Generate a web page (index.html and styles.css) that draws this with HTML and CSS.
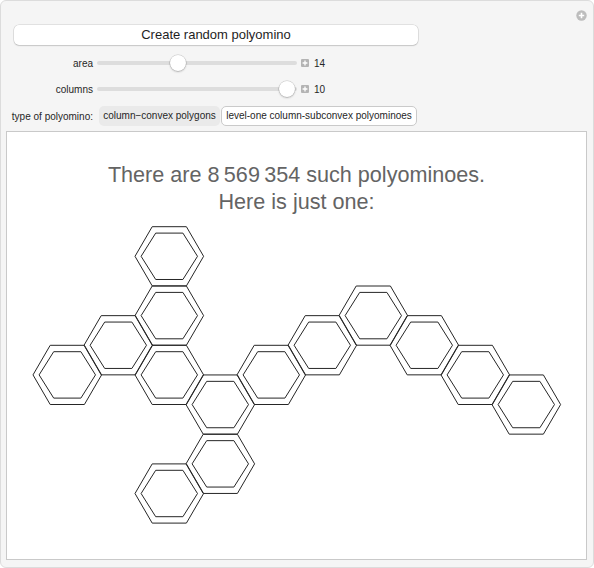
FILE: index.html
```html
<!DOCTYPE html>
<html>
<head>
<meta charset="utf-8">
<link rel="stylesheet" href="styles.css">
</head>
<body>
<div class="window">
  <div class="header">
    <svg class="corner-icon" width="11" height="11" viewBox="0 0 11 11">
      <circle cx="5.5" cy="5.5" r="5.2" fill="#bdbdbd"/>
      <path d="M5.5 2.8v5.4M2.8 5.5h5.4" stroke="#fff" stroke-width="1.6"/>
    </svg>
  </div>
  <button class="main-btn">Create random polyomino</button>
  <div class="row">
    <span class="label">area</span>
    <div class="slider"><div class="track"></div><div class="thumb" style="left:40.5%"></div></div>
    <svg class="plus" width="8" height="8" viewBox="0 0 8 8"><rect width="8" height="8" rx="1" fill="#b4b4b4"/><path d="M4 1.6v4.8M1.6 4h4.8" stroke="#fff" stroke-width="1.3"/></svg>
    <span class="value">14</span>
  </div>
  <div class="row">
    <span class="label">columns</span>
    <div class="slider"><div class="track"></div><div class="thumb" style="left:95%"></div></div>
    <svg class="plus" width="8" height="8" viewBox="0 0 8 8"><rect width="8" height="8" rx="1" fill="#b4b4b4"/><path d="M4 1.6v4.8M1.6 4h4.8" stroke="#fff" stroke-width="1.3"/></svg>
    <span class="value">10</span>
  </div>
  <div class="type-row">
    <span class="label">type of polyomino:</span>
    <div class="segmented">
      <span class="seg">column−convex polygons</span>
      <span class="seg active">level-one column-subconvex polyominoes</span>
    </div>
  </div>
  <div class="output">
    <div class="caption">There are 8&#8201;569&#8201;354 such polyominoes.<br>Here is just one:</div>
    <svg class="drawing" width="579" height="344" viewBox="7 215 579 344">
      <defs>
        <g id="hex" fill="none" stroke="#262626" stroke-width="1">
          <polygon points="-34.3,0 -17.1,-29.6 17.1,-29.6 34.3,0 17.1,29.6 -17.1,29.6"/>
          <polygon points="-28.2,0 -13.6,-23.2 13.6,-23.2 28.2,0 13.6,23.2 -13.6,23.2"/>
        </g>
      </defs>
      <use href="#hex" x="67.3" y="374.9"/>
      <use href="#hex" x="118.3" y="345.25"/>
      <use href="#hex" x="169.3" y="256.3"/>
      <use href="#hex" x="169.3" y="315.6"/>
      <use href="#hex" x="169.3" y="374.9"/>
      <use href="#hex" x="169.3" y="493.5"/>
      <use href="#hex" x="220.3" y="404.55"/>
      <use href="#hex" x="220.3" y="463.85"/>
      <use href="#hex" x="271.3" y="374.9"/>
      <use href="#hex" x="322.3" y="345.25"/>
      <use href="#hex" x="373.3" y="315.6"/>
      <use href="#hex" x="424.3" y="345.25"/>
      <use href="#hex" x="475.3" y="374.9"/>
      <use href="#hex" x="526.3" y="404.55"/>
    </svg>
  </div>
</div>
</body>
</html>
```

FILE: styles.css
```css
html, body {
  margin: 0;
  padding: 0;
  background: #ffffff;
}

body {
  font-family: "Liberation Sans", Arial, sans-serif;
  color: #222222;
}

.window {
  box-sizing: border-box;
  width: 594px;
  height: 568px;
  border: 1px solid #dcdcdc;
  border-radius: 6px;
  background: #f5f5f5;
  display: flex;
  flex-direction: column;
}

.header {
  height: 24px;
  display: flex;
  justify-content: flex-end;
  padding-right: 6px;
}

.corner-icon {
  margin-top: 9px;
  display: block;
}

.main-btn {
  box-sizing: border-box;
  margin-left: 13px;
  width: 404px;
  height: 20px;
  padding: 0;
  border: none;
  border-radius: 5px;
  background: #ffffff;
  box-shadow: 0 0 0 0.5px rgba(0, 0, 0, 0.16), 0 1px 1.5px rgba(0, 0, 0, 0.12);
  font-family: "Liberation Sans", Arial, sans-serif;
  font-size: 13px;
  color: #1e1e1e;
  text-align: center;
  line-height: 20px;
}

.row {
  display: flex;
  align-items: center;
  height: 26px;
}

.main-btn + .row {
  margin-top: 5px;
}

.label {
  width: 92px;
  text-align: right;
  font-size: 10px;
  color: #262626;
  flex: none;
}

.slider {
  position: relative;
  margin-left: 4px;
  width: 200px;
  height: 16px;
  flex: none;
}

.track {
  margin-top: 6px;
  height: 4px;
  border-radius: 2px;
  background: #dddddd;
}

.thumb {
  position: absolute;
  top: 0;
  width: 16px;
  height: 16px;
  margin-left: -8px;
  border-radius: 50%;
  background: #ffffff;
  box-shadow: 0 0 0 0.5px rgba(0, 0, 0, 0.18), 0 1px 2px rgba(0, 0, 0, 0.22);
}

.plus {
  display: block;
  margin-left: 4px;
  flex: none;
}

.value {
  margin-left: 5px;
  font-size: 10px;
  color: #262626;
}

.type-row {
  display: flex;
  align-items: center;
  height: 20px;
  margin-top: 4px;
}

.segmented {
  display: flex;
  margin-left: 6px;
  height: 20px;
}

.seg {
  box-sizing: border-box;
  height: 20px;
  line-height: 18px;
  font-size: 10px;
  color: #262626;
  border-radius: 5px;
  border: 1px solid transparent;
  background: #eaeaea;
  width: 121px;
  text-align: center;
}

.seg.active {
  margin-left: 1px;
  width: 196px;
  background: #ffffff;
  border-color: #cacaca;
}

.output {
  box-sizing: border-box;
  margin: 5px 6px 0 5px;
  height: 429px;
  border: 1px solid #c9c9c9;
  background: #ffffff;
  padding-top: 29px;
  display: flex;
  flex-direction: column;
}

.caption {
  height: 54px;
  text-align: center;
  font-size: 21.6px;
  line-height: 27px;
  color: #646464;
}

.drawing {
  display: block;
}
```
